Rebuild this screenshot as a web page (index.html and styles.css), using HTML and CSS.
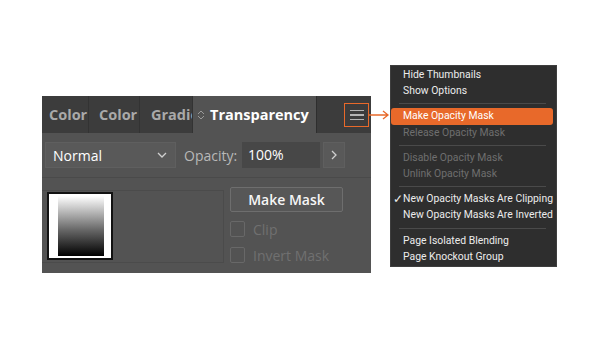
FILE: index.html
```html
<!DOCTYPE html>
<html lang="en">
<head>
    <meta charset="UTF-8">
    <meta name="viewport" content="width=device-width, initial-scale=1.0">
    <title>Transparency panel</title>
    <link rel="stylesheet" href="styles.css">
</head>
<body>
    <div class="stage">
        <div class="panel">
            <div class="tabs">
                <div class="tab tab-1">Color</div>
                <div class="tab tab-2">Color</div>
                <div class="tab tab-3">Gradient</div>
                <div class="tab active">
                    <svg class="tab-icon" width="8" height="10" viewBox="0 0 8 10">
                        <path d="M1 4 L4 1 L7 4 M1 6 L4 9 L7 6" fill="none" stroke="#9a9a9a" stroke-width="1"/>
                    </svg>
                    Transparency
                </div>
                <div class="tabs-rest">
                    <div class="menu-btn">
                        <span class="bar"></span>
                        <span class="bar"></span>
                        <span class="bar"></span>
                        <!-- connector arrow to the flyout -->
                        <svg class="connector" width="22" height="10" viewBox="0 0 22 10">
                            <path d="M0 5 H20 M15 1 L20 5 L15 9" fill="none" stroke="#e8692a" stroke-width="1.3"/>
                        </svg>
                    </div>
                </div>
            </div>

            <div class="controls">
                <div class="blend">
                    <span>Normal</span>
                    <svg width="10" height="6" viewBox="0 0 10 6">
                        <path d="M1 1 L5 5 L9 1" fill="none" stroke="#d0d0d0" stroke-width="1.3"/>
                    </svg>
                </div>
                <span class="opacity-label">Opacity:</span>
                <div class="opacity-input">100%</div>
                <div class="opacity-step">
                    <svg width="6" height="10" viewBox="0 0 6 10">
                        <path d="M1 1 L5 5 L1 9" fill="none" stroke="#d0d0d0" stroke-width="1.3"/>
                    </svg>
                </div>
            </div>

            <div class="mask-area">
                <div class="thumb-box">
                    <div class="thumb">
                        <div class="thumb-grad"></div>
                    </div>
                </div>
                <div class="mask-actions">
                    <div class="make-mask">Make Mask</div>
                    <div class="check-row"><span class="check"></span>Clip</div>
                    <div class="check-row"><span class="check"></span>Invert Mask</div>
                </div>
            </div>
        </div>

        <div class="flyout">
            <div class="item">Hide Thumbnails</div>
            <div class="item">Show Options</div>
            <div class="sep"></div>
            <div class="item highlight">Make Opacity Mask</div>
            <div class="item disabled">Release Opacity Mask</div>
            <div class="sep"></div>
            <div class="item disabled">Disable Opacity Mask</div>
            <div class="item disabled">Unlink Opacity Mask</div>
            <div class="sep"></div>
            <div class="item checked">New Opacity Masks Are Clipping</div>
            <div class="item">New Opacity Masks Are Inverted</div>
            <div class="sep"></div>
            <div class="item">Page Isolated Blending</div>
            <div class="item">Page Knockout Group</div>
        </div>
    </div>
</body>
</html>
```

FILE: styles.css
```css
body {
    margin: 0;
    background: #ffffff;
    font-family: "Open Sans", "Liberation Sans", sans-serif;
}
.stage {
    display: flex;
    align-items: flex-start;
    padding: 65px 0 0 42px;
}

/* panel */
.panel {
    width: 329px;
    height: 177px;
    margin-top: 31px;
    background: #535353;
    display: flex;
    flex-direction: column;
}
.tabs {
    height: 37px;
    display: flex;
    background: #3c3c3c;
}
.tab {
    box-sizing: border-box;
    height: 37px;
    line-height: 37px;
    padding-left: 7px;
    font-size: 14.5px;
    font-weight: 700;
    color: #a9a9a9;
    border-right: 1px solid #333333;
    white-space: nowrap;
    overflow: hidden;
}
.tab-1 { width: 47px; }
.tab-2 { width: 51px; padding-left: 10px; }
.tab-3 { width: 53px; padding-left: 11px; }
.tab.active {
    width: 124px;
    padding-left: 4px;
    background: #535353;
    color: #ffffff;
    border-right: 1px solid #2e2e2e;
    display: flex;
    align-items: center;
    gap: 5px;
}
.tab-icon {
    flex: none;
}
.tabs-rest {
    flex: 1;
    display: flex;
    align-items: center;
    justify-content: flex-end;
    padding-right: 2px;
}
.menu-btn {
    position: relative;
    box-sizing: border-box;
    width: 25px;
    height: 24px;
    border: 1.5px solid #e8692a;
    display: flex;
    flex-direction: column;
    justify-content: center;
    align-items: center;
    gap: 3px;
    margin-top: 1px;
}
.bar {
    width: 14px;
    height: 1.5px;
    background: #b4b4b4;
}
.connector {
    position: absolute;
    left: 23px;
    top: 6px;
}

.controls {
    box-sizing: border-box;
    height: 45px;
    display: flex;
    align-items: center;
    padding-left: 3px;
    border-bottom: 1px solid #4a4a4a;
}
.blend {
    box-sizing: border-box;
    width: 131px;
    height: 26px;
    background: #595959;
    border: 1px solid #5f5f5f;
    display: flex;
    align-items: center;
    justify-content: space-between;
    padding: 0 8px 0 7px;
    font-size: 14px;
    color: #ffffff;
}
.opacity-label {
    margin-left: 8px;
    width: 58px;
    font-size: 14px;
    color: #b8b8b8;
}
.opacity-input {
    box-sizing: border-box;
    width: 78px;
    height: 26px;
    line-height: 25px;
    padding-left: 6px;
    background: #474747;
    font-size: 14px;
    color: #ffffff;
}
.opacity-step {
    box-sizing: border-box;
    width: 22px;
    height: 26px;
    margin-left: 3px;
    background: #595959;
    border: 1px solid #5f5f5f;
    display: flex;
    align-items: center;
    justify-content: center;
}

.mask-area {
    display: flex;
    gap: 6px;
}
.thumb-box {
    box-sizing: border-box;
    width: 182px;
    height: 73px;
    margin-top: 12px;
    border: 1px solid #4b4b4b;
    border-left: none;
    padding: 1px 0 0 5px;
}
.thumb {
    box-sizing: border-box;
    width: 66px;
    height: 68px;
    background: #ffffff;
    border: 2px solid #111111;
    padding: 2px 7px 2px 9px;
}
.thumb-grad {
    height: 100%;
    background: linear-gradient(#ffffff, #6b6b6b 55%, #000000);
}
.mask-actions {
    padding-top: 9px;
    display: flex;
    flex-direction: column;
}
.make-mask {
    box-sizing: border-box;
    width: 113px;
    height: 25px;
    line-height: 23px;
    border: 1px solid #6e6e6e;
    border-radius: 2px;
    background: #575757;
    text-align: center;
    font-size: 14px;
    font-weight: 600;
    color: #f6f6f6;
}
.check-row {
    display: flex;
    align-items: center;
    height: 16px;
    margin-top: 9px;
    font-size: 14px;
    color: #707070;
    gap: 8px;
}
.check-row + .check-row {
    margin-top: 10px;
}
.check {
    box-sizing: border-box;
    width: 15px;
    height: 16px;
    border: 1px solid #686868;
    border-radius: 2px;
}

/* flyout menu */
.flyout {
    box-sizing: border-box;
    width: 167px;
    margin-left: 19px;
    padding: 1px 0;
    background: #2e2e2e;
    border: 1px solid #3e3e3e;
    font-family: Roboto, "Liberation Sans", sans-serif;
    font-size: 10.4px;
}
.item {
    height: 16.2px;
    line-height: 16px;
    padding-left: 12px;
    color: #ececec;
    white-space: nowrap;
}
.item.disabled {
    color: #6f6f6f;
}
.item.highlight {
    background: #e8692a;
    color: #ffffff;
    margin-right: 3px;
    border-radius: 3px;
}
.item.checked {
    position: relative;
}
.item.checked::before {
    content: "\2713";
    position: absolute;
    left: 2px;
    font-size: 11.5px;
}
.sep {
    height: 1px;
    margin: 4px 10px 4px 8px;
    background: #4a4a4a;
}
```
